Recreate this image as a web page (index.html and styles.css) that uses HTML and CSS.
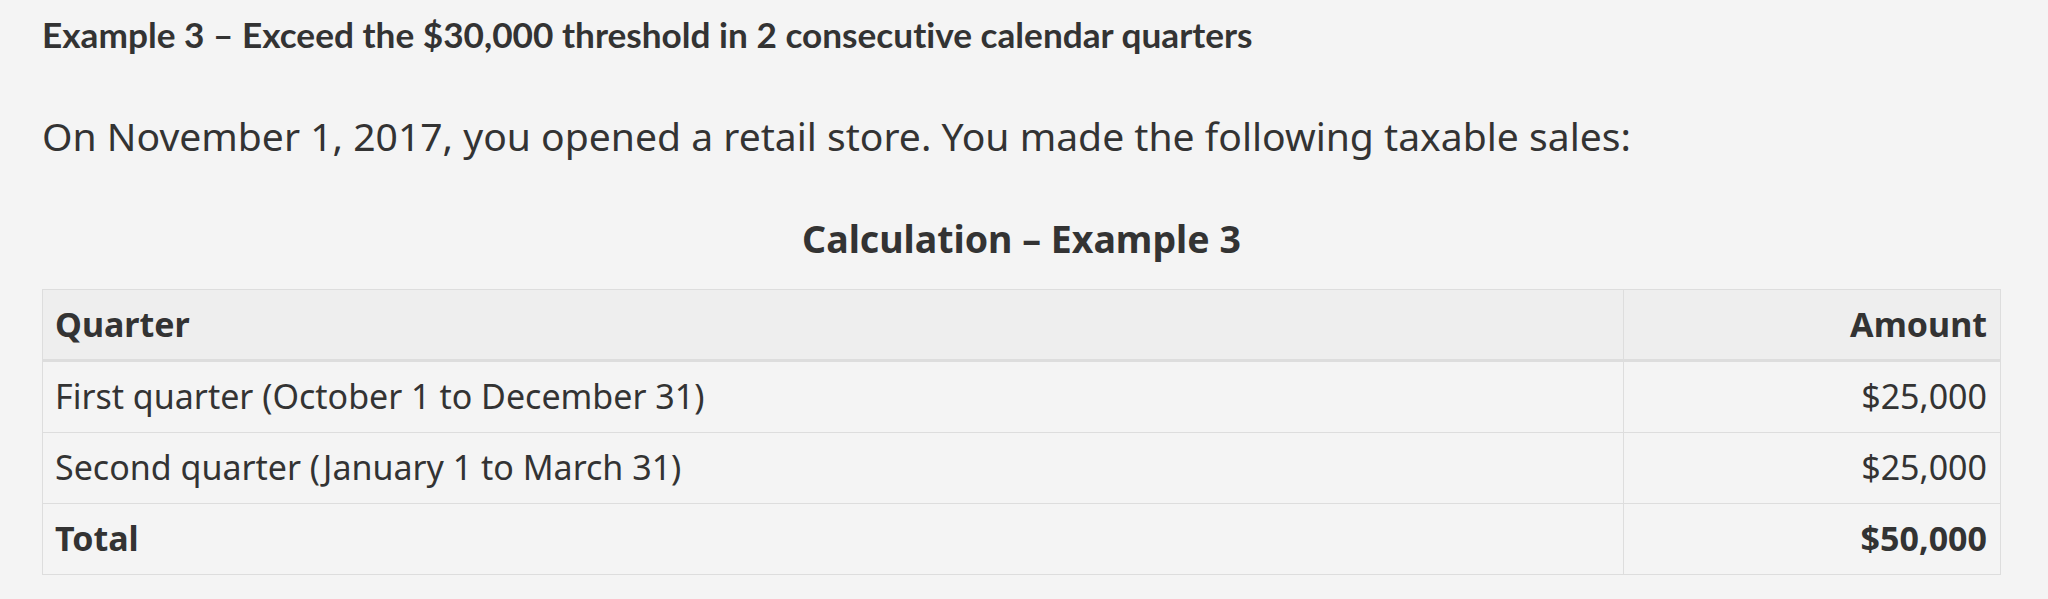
FILE: index.html
```html
<!DOCTYPE html>
<html lang="en">
<head>
<meta charset="utf-8">
<title>Example 3</title>
<link rel="stylesheet" href="styles.css">
</head>
<body>
<main class="content">
  <h4 class="example-title">Example 3 – Exceed the $30,000 threshold in 2 consecutive calendar quarters</h4>
  <p class="intro">On November 1, 2017, you opened a retail store. You made the following taxable sales:</p>
  <table class="calc">
    <caption>Calculation – Example 3</caption>
    <thead>
      <tr><th class="col-q">Quarter</th><th class="num">Amount</th></tr>
    </thead>
    <tbody>
      <tr><td>First quarter (October 1 to December 31)</td><td class="num">$25,000</td></tr>
      <tr><td>Second quarter (January 1 to March 31)</td><td class="num">$25,000</td></tr>
      <tr class="total"><th>Total</th><td class="num">$50,000</td></tr>
    </tbody>
  </table>
</main>
</body>
</html>
```
FILE: styles.css
```css
html, body {
  margin: 0;
  padding: 0;
  background: #f4f4f4;
}
body {
  color: #333333;
  font-family: "Noto Sans", "Open Sans", sans-serif;
}
.content {
  padding: 11px 47px 0 42px;
}
.example-title {
  font-family: Lato, "Noto Sans", sans-serif;
  font-weight: 700;
  font-size: 35.2px;
  line-height: 46px;
  margin: 0;
  font-variant-ligatures: none;
  font-feature-settings: "liga" 0, "clig" 0, "dlig" 0;
}
.intro {
  font-size: 39.1px;
  line-height: 60px;
  margin: 49px 0 0 0;
}
.calc {
  width: 100%;
  border-collapse: collapse;
  margin-top: 48px;
  font-size: 34px;
  line-height: 45px;
}
.calc caption {
  font-weight: 700;
  font-size: 37.5px;
  line-height: 50px;
  padding-bottom: 25px;
  text-align: center;
}
.calc th, .calc td {
  border: 1px solid #dddddd;
  padding: 12px 13px 13px 12px;
  text-align: left;
  vertical-align: top;
}
.calc thead th {
  background: #eeeeee;
  border-bottom: 3px solid #dddddd;
  padding: 12px 13px 12px 12px;
}
.calc th { font-weight: 700; }
.calc .num { text-align: right; width: 351px; }
.calc .total td { font-weight: 700; }
```
